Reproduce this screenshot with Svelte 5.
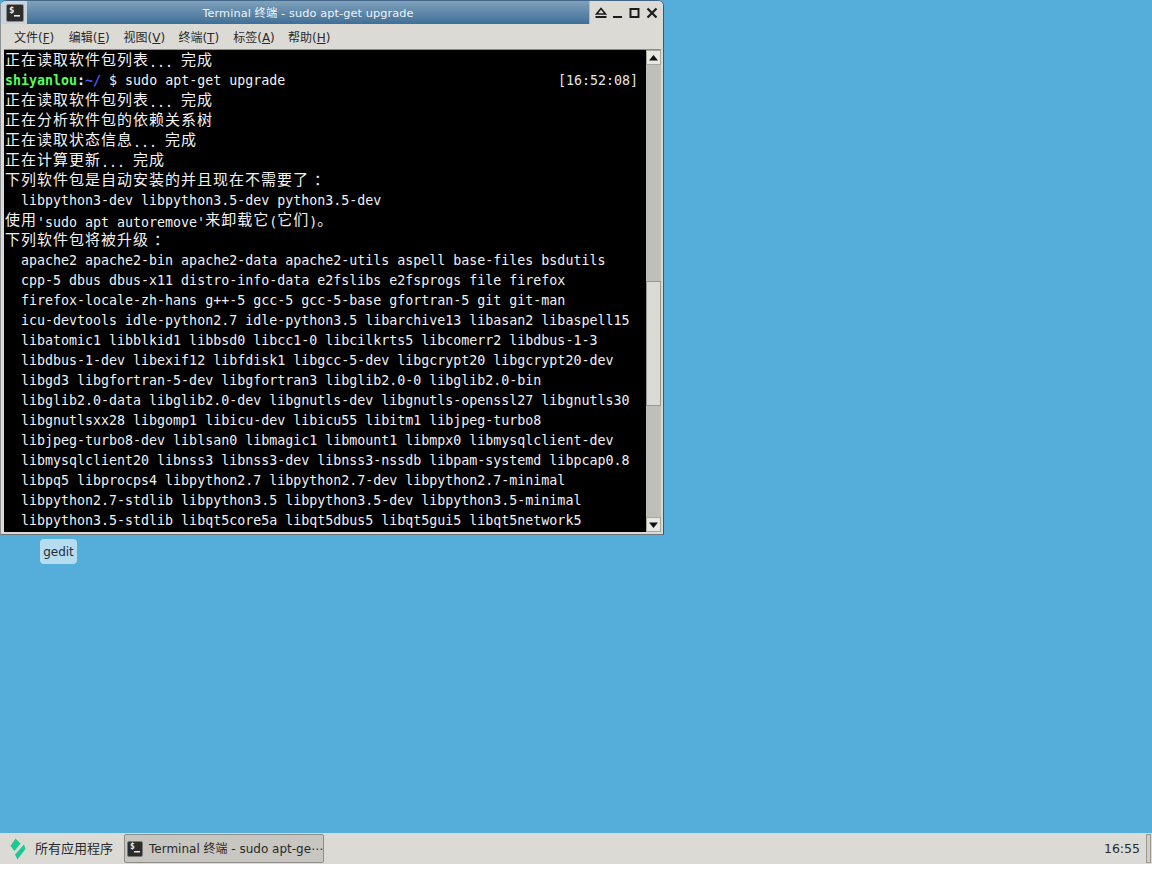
<script>
  const lines = [
    '正在读取软件包列表... 完成',
    null,
    '正在读取软件包列表... 完成',
    '正在分析软件包的依赖关系树',
    '正在读取状态信息... 完成',
    '正在计算更新... 完成',
    '下列软件包是自动安装的并且现在不需要了：',
    '  libpython3-dev libpython3.5-dev python3.5-dev',
    "使用'sudo apt autoremove'来卸载它(它们)。",
    '下列软件包将被升级：',
    '  apache2 apache2-bin apache2-data apache2-utils aspell base-files bsdutils',
    '  cpp-5 dbus dbus-x11 distro-info-data e2fslibs e2fsprogs file firefox',
    '  firefox-locale-zh-hans g++-5 gcc-5 gcc-5-base gfortran-5 git git-man',
    '  icu-devtools idle-python2.7 idle-python3.5 libarchive13 libasan2 libaspell15',
    '  libatomic1 libblkid1 libbsd0 libcc1-0 libcilkrts5 libcomerr2 libdbus-1-3',
    '  libdbus-1-dev libexif12 libfdisk1 libgcc-5-dev libgcrypt20 libgcrypt20-dev',
    '  libgd3 libgfortran-5-dev libgfortran3 libglib2.0-0 libglib2.0-bin',
    '  libglib2.0-data libglib2.0-dev libgnutls-dev libgnutls-openssl27 libgnutls30',
    '  libgnutlsxx28 libgomp1 libicu-dev libicu55 libitm1 libjpeg-turbo8',
    '  libjpeg-turbo8-dev liblsan0 libmagic1 libmount1 libmpx0 libmysqlclient-dev',
    '  libmysqlclient20 libnss3 libnss3-dev libnss3-nssdb libpam-systemd libpcap0.8',
    '  libpq5 libprocps4 libpython2.7 libpython2.7-dev libpython2.7-minimal',
    '  libpython2.7-stdlib libpython3.5 libpython3.5-dev libpython3.5-minimal',
    '  libpython3.5-stdlib libqt5core5a libqt5dbus5 libqt5gui5 libqt5network5'
  ];
  const split = (s) => s.match(/：|[\u3000-\u9fff]+|[^\u3000-\u9fff：]+/g).map((t) => ({ t, cjk: /[\u3000-\u9fff：]/.test(t), colon: t === '：' }));
  const menus = [['文件', 'F'], ['编辑', 'E'], ['视图', 'V'], ['终端', 'T'], ['标签', 'A'], ['帮助', 'H']];
</script>

<div class="desktop">
  <section class="window">
    <header class="titlebar">
      <div class="appicon">
        <svg width="18" height="18" viewBox="0 0 18 18">
          <rect x=".5" y=".5" width="17" height="17" rx="1.5" fill="#2c2c2c" stroke="#8a8a88"/>
          <text x="3" y="9" class="dollar">$</text>
          <rect x="8" y="11" width="6" height="1.6" fill="#e8e8e8"/>
        </svg>
      </div>
      <div class="title-grad"><span>Terminal 终端 - sudo apt-get upgrade</span></div>
      <div class="controls">
        <svg width="14" height="14" viewBox="0 0 14 14"><path d="M7 2.5 L11.5 8 H2.5 Z" fill="none" stroke="#1c1c1c" stroke-width="1.6"/><rect x="1.5" y="10" width="11" height="2" fill="#1c1c1c"/></svg>
        <svg width="14" height="14" viewBox="0 0 14 14"><rect x="2" y="10" width="9" height="2" fill="#1c1c1c"/></svg>
        <svg width="14" height="14" viewBox="0 0 14 14"><rect x="2.5" y="3" width="8" height="8" fill="none" stroke="#1c1c1c" stroke-width="2"/></svg>
        <svg width="14" height="14" viewBox="0 0 14 14"><path d="M2.5 2.5 L11.5 11.5 M11.5 2.5 L2.5 11.5" stroke="#1c1c1c" stroke-width="2.2"/></svg>
      </div>
    </header>
    <nav class="menubar">
      {#each menus as [label, key]}
        <span class="menu">{label}(<u>{key}</u>)</span>
      {/each}
    </nav>
    <div class="termwrap">
      <div class="term">
        {#each lines as line}
          {#if line === null}
            <div class="line promptline">
              <span><b class="user">shiyanlou</b><b class="colon">:</b><b class="path">~/</b> $ sudo apt-get upgrade</span>
              <span class="time">[16:52:08]</span>
            </div>
          {:else}
            <div class="line">{#each split(line) as seg}{#if seg.cjk}<span class="cjk" class:fullcolon={seg.colon}>{seg.t}</span>{:else}{seg.t}{/if}{/each}</div>
          {/if}
        {/each}
      </div>
      <div class="scrollbar">
        <div class="arrow"><svg width="9" height="6" viewBox="0 0 9 6"><path d="M4.5 0 L9 5.5 H0 Z" fill="#111"/></svg></div>
        <div class="track"><div class="thumb"></div></div>
        <div class="arrow"><svg width="9" height="6" viewBox="0 0 9 6"><path d="M0 .5 H9 L4.5 6 Z" fill="#111"/></svg></div>
      </div>
    </div>
  </section>

  <div class="tooltip">gedit</div>

  <footer class="taskbar">
    <div class="start">
      <svg class="logo" width="16" height="23" viewBox="0 0 16 23">
        <path d="M5.5 1.5 L10.5 6.5 L4.5 14 L0.5 9 Z" fill="#1cc994"/>
        <path d="M14 7.5 L15.5 12 L7.5 22.5 L5 17.5 Z" fill="#1cc994"/>
      </svg>
      <span>所有应用程序</span>
    </div>
    <div class="task">
      <svg width="16" height="16" viewBox="0 0 16 16">
        <rect x=".5" y=".5" width="15" height="15" rx="1.5" fill="#2c2c2c" stroke="#777"/>
        <text x="3" y="8" class="dollar small">$</text>
        <rect x="7" y="10" width="6" height="1.5" fill="#e8e8e8"/>
      </svg>
      <span>Terminal 终端 - sudo apt-ge⋯</span>
    </div>
    <div class="spacer"></div>
    <div class="clock">16:55</div>
    <div class="handle"></div>
  </footer>
</div>

<style>
  :global(body) { margin: 0; background: #fff; }
  .desktop {
    position: relative;
    width: 1152px;
    height: 896px;
    overflow: hidden;
    display: flex;
    flex-direction: column;
    justify-content: flex-end;
    padding-bottom: 32px;
    box-sizing: border-box;
    background: linear-gradient(#54aed9, #54aed9) top / 100% 833px no-repeat #fff;
    font-family: "DejaVu Sans", "Noto Sans CJK SC", sans-serif;
  }
  .window {
    position: absolute;
    left: 0;
    top: 0;
    width: 664px;
    height: 535px;
    box-sizing: border-box;
    background: #dcdad5;
    border-radius: 6px 6px 0 0;
    border-right: 1px solid #4f5357;
    border-bottom: 1px solid #6f7478;
    border-left: 1px solid #8d9296;
    border-top: 1px solid #44688a;
    display: flex;
    flex-direction: column;
  }
  .titlebar {
    height: 23px;
    display: flex;
    background: #dcdad5;
    border-radius: 5px 5px 0 0;
    overflow: hidden;
    flex: none;
  }
  .appicon {
    width: 26px;
    display: flex;
    align-items: center;
    justify-content: center;
    padding-left: 1px;
    background: #c9d4de;
    box-sizing: border-box;
  }
  .dollar { font: bold 9px "DejaVu Sans Mono", monospace; fill: #eee; }
  .dollar.small { font-size: 8px; }
  .title-grad {
    flex: 1;
    background: linear-gradient(#80a1bc, #3f6f97);
    color: #f0f3f5;
    font-size: 11.3px;
    display: flex;
    align-items: center;
    justify-content: center;
    padding-bottom: 2px;
    letter-spacing: .1px;
    box-sizing: border-box;
  }
  .controls {
    width: 74px;
    display: flex;
    align-items: center;
    justify-content: flex-end;
    gap: 3px;
    padding-right: 4px;
    box-sizing: border-box;
    background: #dcdad5;
    border-left: 1px solid #b9b9b5;
  }
  .menubar {
    height: 25px;
    display: flex;
    align-items: center;
    padding-left: 13px;
    gap: 13px;
    font-size: 12px;
    color: #2a2a2a;
    flex: none;
  }
  .menu { white-space: nowrap; width: 41.8px; }
  .menu u { text-underline-offset: 1px; }
  .termwrap {
    margin: 0 2px 2px 3px;
    flex: 1;
    min-height: 0;
    display: flex;
    border-top: 1px solid #8d8d88;
  }
  .term {
    flex: 1;
    background: #000;
    color: #f2f2f2;
    padding: 1px 0 0 1px;
    font-family: "DejaVu Sans Mono", "Noto Sans CJK SC", monospace;
    font-size: 13.3px;
  }
  .line {
    height: 20px;
    line-height: 20px;
    white-space: pre;
    box-sizing: border-box;
  }
  .cjk {
    font-family: "Noto Sans CJK SC", sans-serif;
    font-size: 15px;
    letter-spacing: 1px;
    vertical-align: 2px;
    line-height: 1;
  }
  .cjk.fullcolon { padding-left: 5px; }
  .promptline { display: flex; justify-content: space-between; padding-right: 8px; }
  .user { color: #55ff55; }
  .colon { color: #f2f2f2; font-weight: bold; }
  .path { color: #4a5cff; }
  .time { color: #e6e6e6; }
  .scrollbar {
    width: 15px;
    display: flex;
    flex-direction: column;
    background: #c0beb8;
    flex: none;
  }
  .arrow {
    height: 15px;
    box-sizing: border-box;
    background: #e9e7e3;
    border: 1px solid #a8a69f;
    display: flex;
    align-items: center;
    justify-content: center;
    flex: none;
  }
  .track {
    flex: 1;
    padding-top: 216px;
  }
  .thumb {
    height: 125px;
    box-sizing: border-box;
    background: #dcdad5;
    border: 1px solid #9a978f;
  }
  .tooltip {
    position: absolute;
    left: 40px;
    top: 539px;
    width: 37px;
    height: 25px;
    box-sizing: border-box;
    border-radius: 4px;
    background: #b5dcef;
    color: #1f2f3a;
    font-size: 12px;
    display: flex;
    align-items: center;
    justify-content: center;
  }
  .taskbar {
    height: 31px;
    flex: none;
    background: #dcdad5;
    display: flex;
    align-items: center;
    color: #2a2a2a;
    font-size: 12px;
  }
  .start {
    display: flex;
    align-items: center;
    gap: 9px;
    padding-left: 10px;
    width: 124px;
    box-sizing: border-box;
  }
  .logo { flex: none; }
  .start span { font-size: 13px; padding-bottom: 3px; }
  .task {
    width: 200px;
    height: 29px;
    box-sizing: border-box;
    border: 1px solid #8f8d87;
    border-radius: 2px;
    background: #c8c6c1;
    display: flex;
    align-items: center;
    gap: 6px;
    padding-left: 2px;
    white-space: nowrap;
    overflow: hidden;
  }
  .task svg { flex: none; }
  .task span { padding-bottom: 3px; }
  .spacer { flex: 1; }
  .clock { font-size: 12.5px; margin-right: 6px; }
  .handle {
    width: 3px;
    height: 27px;
    margin-right: 1px;
    border: 1px solid #9a978f;
    background: #d0cec9;
  }
</style>
